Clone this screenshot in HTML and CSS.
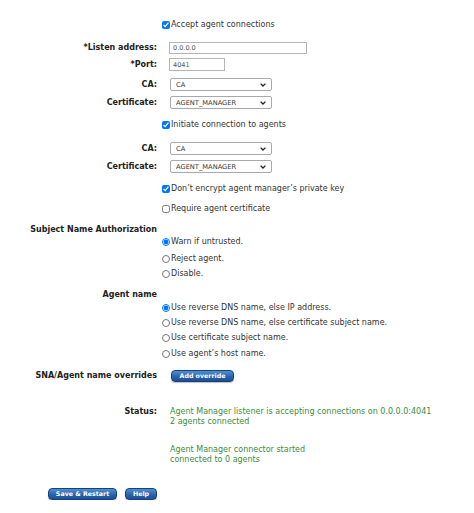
FILE: index.html
```html
<!DOCTYPE html>
<html lang="en">
<head>
<meta charset="utf-8">
<title>Agent Manager</title>
<link rel="stylesheet" href="styles.css">
</head>
<body>
<form class="form">
  <div class="row first">
    <span class="lbl"></span>
    <label class="opt"><input type="checkbox" checked>Accept agent connections</label>
  </div>
  <div class="row mt11">
    <span class="lbl">*Listen address:</span>
    <div class="ctl"><input class="text wide" type="text" value="0.0.0.0"></div>
  </div>
  <div class="row mt4">
    <span class="lbl">*Port:</span>
    <div class="ctl"><input class="text short" type="text" value="4041"></div>
  </div>
  <div class="row mt8">
    <span class="lbl">CA:</span>
    <div class="ctl sel"><span class="pick-wrap"><select class="pick"><option>CA</option></select><svg class="chev" viewBox="0 0 6 4"><path d="M0.6 0.6 L3 3 L5.4 0.6" fill="none" stroke="#222" stroke-width="1.3"/></svg></span></div>
  </div>
  <div class="row mt6">
    <span class="lbl">Certificate:</span>
    <div class="ctl sel"><span class="pick-wrap"><select class="pick"><option>AGENT_MANAGER</option></select><svg class="chev" viewBox="0 0 6 4"><path d="M0.6 0.6 L3 3 L5.4 0.6" fill="none" stroke="#222" stroke-width="1.3"/></svg></span></div>
  </div>
  <div class="row mt11">
    <span class="lbl"></span>
    <label class="opt"><input type="checkbox" checked>Initiate connection to agents</label>
  </div>
  <div class="row mt11">
    <span class="lbl">CA:</span>
    <div class="ctl sel"><span class="pick-wrap"><select class="pick"><option>CA</option></select><svg class="chev" viewBox="0 0 6 4"><path d="M0.6 0.6 L3 3 L5.4 0.6" fill="none" stroke="#222" stroke-width="1.3"/></svg></span></div>
  </div>
  <div class="row mt6">
    <span class="lbl">Certificate:</span>
    <div class="ctl sel"><span class="pick-wrap"><select class="pick"><option>AGENT_MANAGER</option></select><svg class="chev" viewBox="0 0 6 4"><path d="M0.6 0.6 L3 3 L5.4 0.6" fill="none" stroke="#222" stroke-width="1.3"/></svg></span></div>
  </div>
  <div class="row mt11">
    <span class="lbl"></span>
    <label class="opt"><input type="checkbox" checked>Don’t encrypt agent manager’s private key</label>
  </div>
  <div class="row mt8">
    <span class="lbl"></span>
    <label class="opt"><input type="checkbox">Require agent certificate</label>
  </div>

  <div class="row mt9">
    <span class="lbl">Subject Name Authorization</span>
  </div>
  <div class="row">
    <span class="lbl"></span>
    <label class="opt"><input type="radio" name="sna" checked>Warn if untrusted.</label>
  </div>
  <div class="row mt5">
    <span class="lbl"></span>
    <label class="opt"><input type="radio" name="sna">Reject agent.</label>
  </div>
  <div class="row mt3">
    <span class="lbl"></span>
    <label class="opt"><input type="radio" name="sna">Disable.</label>
  </div>

  <div class="row mt9">
    <span class="lbl">Agent name</span>
  </div>
  <div class="row mt1">
    <span class="lbl"></span>
    <label class="opt"><input type="radio" name="an" checked>Use reverse DNS name, else IP address.</label>
  </div>
  <div class="row mt3">
    <span class="lbl"></span>
    <label class="opt"><input type="radio" name="an">Use reverse DNS name, else certificate subject name.</label>
  </div>
  <div class="row mt3">
    <span class="lbl"></span>
    <label class="opt"><input type="radio" name="an">Use certificate subject name.</label>
  </div>
  <div class="row mt4">
    <span class="lbl"></span>
    <label class="opt"><input type="radio" name="an">Use agent’s host name.</label>
  </div>

  <div class="row mt10">
    <span class="lbl">SNA/Agent name overrides</span>
    <div class="ctl btnctl"><button type="button" class="btn">Add override</button></div>
  </div>

  <div class="row status-row">
    <span class="lbl status-lbl">Status:</span>
    <div class="ctl status">
      <p>Agent Manager listener is accepting connections on 0.0.0.0:4041<br>2 agents connected</p>
      <p class="second">Agent Manager connector started<br>connected to 0 agents</p>
    </div>
  </div>

  <div class="actions">
    <button type="button" class="btn">Save &amp; Restart</button>
    <button type="button" class="btn">Help</button>
  </div>
</form>
</body>
</html>
```

FILE: styles.css
```css
html, body {
  margin: 0;
  padding: 0;
  background: #ffffff;
}

body {
  font-family: "DejaVu Sans", Verdana, sans-serif;
  font-size: 8px;
  color: #333333;
}

.form {
  display: flex;
  flex-direction: column;
  padding-top: 19px;
}

.row {
  display: grid;
  grid-template-columns: 157px 1fr;
  column-gap: 5px;
  height: 12px;
  align-items: center;
}

.mt1 { margin-top: 1px; }
.mt3 { margin-top: 3px; }
.mt4 { margin-top: 4px; }
.mt5 { margin-top: 5px; }
.mt6 { margin-top: 6px; }
.mt8 { margin-top: 8px; }
.mt9 { margin-top: 9px; }
.mt10 { margin-top: 10px; }
.mt11 { margin-top: 11px; }

.lbl {
  text-align: right;
  font-weight: bold;
  color: #222222;
  line-height: 12px;
  white-space: nowrap;
}

.opt {
  display: flex;
  align-items: center;
  line-height: 12px;
  white-space: nowrap;
  color: #333333;
}

.opt input {
  width: 8px;
  height: 8px;
  margin: 0 1px 0 0;
}

.ctl {
  display: flex;
  align-items: center;
  padding-left: 7px;
}

.ctl.sel {
  padding-left: 8px;
}

.text {
  box-sizing: border-box;
  height: 12px;
  border: 1px solid #b5b5b5;
  border-radius: 0;
  padding: 0 3px;
  font-family: "DejaVu Sans", Verdana, sans-serif;
  font-size: 6.5px;
  color: #555555;
  outline: none;
}

.text.wide { width: 138px; }
.text.short { width: 56px; height: 13px; }

.pick-wrap {
  position: relative;
  display: inline-flex;
}

.pick {
  box-sizing: border-box;
  appearance: none;
  -webkit-appearance: none;
  width: 102px;
  height: 13px;
  border: 1px solid #a9a9a9;
  border-radius: 2px;
  background-color: #ffffff;
  padding: 0 0 0 5px;
  margin: 0;
  font-family: "DejaVu Sans", Verdana, sans-serif;
  font-size: 6.7px;
  color: #333333;
}

.chev {
  position: absolute;
  right: 6px;
  top: 5px;
  width: 6px;
  height: 4px;
  pointer-events: none;
}

.btnctl {
  padding-left: 9px;
}

.btn {
  box-sizing: border-box;
  height: 12px;
  padding: 0 6px;
  border: 1px solid #16427c;
  border-radius: 4px;
  background: linear-gradient(#4f8fd6, #2a64ad 55%, #1b4f92);
  color: #ffffff;
  font-family: "DejaVu Sans", Verdana, sans-serif;
  font-weight: bold;
  font-size: 6.3px;
  line-height: 10px;
  white-space: nowrap;
  box-shadow: 0 1px 1px rgba(0, 0, 0, 0.25);
}

.btnctl .btn {
  width: 63px;
}

.status-row {
  height: auto;
  align-items: start;
  margin-top: 25px;
}

.status-lbl {
  line-height: 10px;
}

.status {
  display: block;
  padding-left: 8px;
  color: #3c8c3c;
  line-height: 10px;
}

.status p {
  margin: 0;
  white-space: nowrap;
}

.status .second {
  margin-top: 18px;
}

.actions {
  width: 157px;
  display: flex;
  justify-content: flex-end;
  gap: 8px;
  margin-top: 23px;
}

.actions .btn:first-child { width: 69px; }
.actions .btn:last-child { width: 32px; }
```
